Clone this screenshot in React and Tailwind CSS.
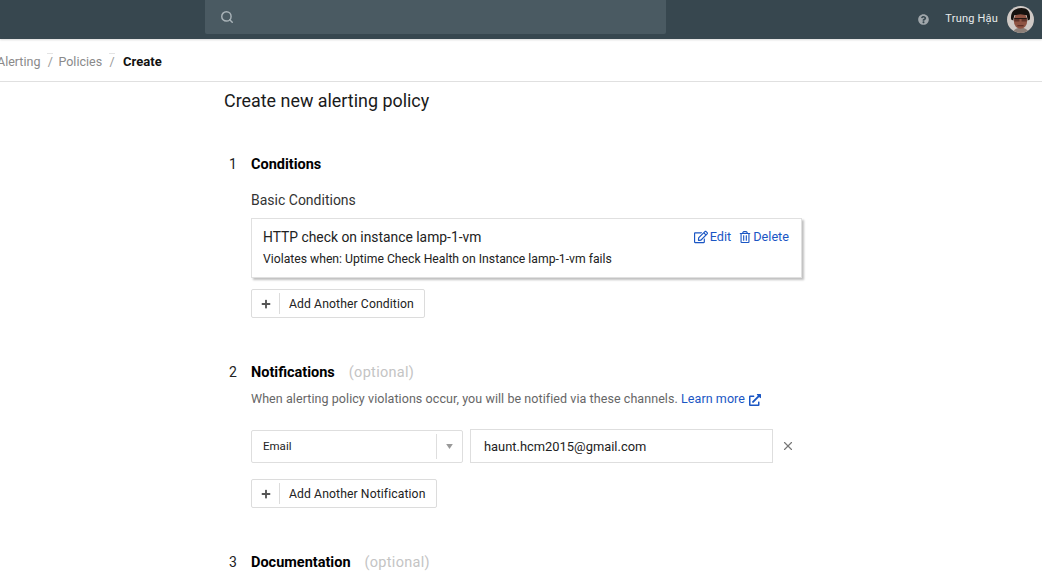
import { Search, X } from 'lucide-react'
import { FaPlus, FaQuestionCircle, FaRegEdit, FaRegTrashAlt, FaExternalLinkAlt } from 'react-icons/fa'

function Avatar() {
  return (
    <svg viewBox="0 0 26 26" className="h-[27px] w-[27px] rounded-full">
      <rect width="26" height="26" fill="#cfc9c5" />
      <path d="M6 26c0-3 3-5 7-5s8 2 8 5z" fill="#8c7f78" />
      <ellipse cx="13" cy="14" rx="6.5" ry="8" fill="#8f5443" />
      <path d="M4 13C3 5 8 2 14 2s9 4 8 11l-2 1-1-5-6-1-6 1-1 5z" fill="#15110e" />
      <path d="M7 12h5v3H7zM14 12h5v3h-5z" fill="#5f3328" />
      <path d="M7 12h12" stroke="#241612" strokeWidth="1" />
      <path d="M10 19h6" stroke="#51261d" strokeWidth="1" />
    </svg>
  )
}

function AddButton({ label, width }) {
  return (
    <button className={`flex h-[29px] ${width} items-center rounded-[2px] border border-[#dcdcdc] bg-white text-[12.2px] text-[#222]`}>
      <span className="flex h-[21px] w-[28px] shrink-0 items-center justify-center border-r border-[#dcdcdc]">
        <FaPlus className="h-[10px] w-[10px] text-[#555]" />
      </span>
      <span className="pl-[9px] pt-[1px] tracking-[0.1px] whitespace-nowrap">{label}</span>
    </button>
  )
}

function StepTitle({ n, title, optional }) {
  return (
    <div className="flex h-5 items-center">
      <span className="w-[27px] pl-[5px] text-[14px] text-[#222]">{n}</span>
      <span className="pt-[1px] text-[14.5px] font-bold text-black">{title}</span>
      {optional && <span className="ml-[14px] pt-[1px] text-[14.5px] tracking-[0.3px] text-[#c4c4c4]">(optional)</span>}
    </div>
  )
}

function Slash({ gap }) {
  return (
    <span className={`${gap} mt-[-3px] w-[6px] border-t border-[#e4e4e4] text-center leading-[15px] text-[#9a9a9a]`}>/</span>
  )
}

export default function App() {
  return (
    <div className="h-[579px] w-[1042px] overflow-hidden bg-white font-['Roboto',sans-serif]">
      <header className="flex h-[39px] items-start bg-[#37474f] shadow-[0_1px_2px_rgba(0,0,0,0.15)]">
        <div className="ml-[205px] flex h-[34px] w-[461px] items-center rounded-b-[2px] bg-[#4a5a62] pl-[15px]">
          <Search className="h-[14px] w-[14px] text-[#a9b3b8]" strokeWidth={2.5} />
        </div>
        <div className="ml-auto flex h-[39px] items-center pr-[8px]">
          <FaQuestionCircle className="h-[11px] w-[11px] text-[#a0a7ab]" />
          <span className="ml-[16px] text-[11px] tracking-[0.2px] text-[#e8ebec]">Trung Hậu</span>
          <span className="ml-[9px]"><Avatar /></span>
        </div>
      </header>

      <nav className="flex h-[43px] items-center border-b border-[#e0e0e0] pt-[4px] text-[12.5px] whitespace-nowrap">
        <span className="ml-[-3px] text-[#8a8a8a]">Alerting</span>
        <Slash gap="ml-[7px]" />
        <span className="ml-[5px] text-[#8a8a8a]">Policies</span>
        <Slash gap="ml-[7px]" />
        <span className="ml-[8px] text-[13px] font-bold text-[#111]">Create</span>
      </nav>

      <main className="pl-[224px]">
        <h1 className="mt-[7px] h-[24px] text-[17.9px] leading-[24px] text-[#1a1a1a]">Create new alerting policy</h1>

        <section className="mt-[41px]">
          <StepTitle n="1" title="Conditions" />
          <div className="pl-[27px]">
            <p className="mt-[16px] h-5 text-[14px] leading-5 text-[#333]">Basic Conditions</p>
            <div className="mt-[8px] flex h-[60px] w-[551px] justify-between border border-[#e0e0e0] bg-white pl-[11px] pr-[12px] pt-[9px] shadow-[2px_2px_2px_rgba(0,0,0,0.25)]">
              <div>
                <p className="h-[18px] text-[13.85px] leading-[18px] text-[#222]">HTTP check on instance lamp-1-vm</p>
                <p className="mt-[5px] text-[12.2px] leading-[16px] text-[#222]">Violates when: Uptime Check Health on Instance lamp-1-vm fails</p>
              </div>
              <div className="flex h-[18px] items-center text-[12.7px] text-[#1a56c4]">
                <FaRegEdit className="mr-[2px] h-[14px] w-[14px]" />
                <span>Edit</span>
                <FaRegTrashAlt className="ml-[8px] mr-[2px] h-[12px] w-[12px]" />
                <span>Delete</span>
              </div>
            </div>
            <div className="mt-[11px]">
              <AddButton label="Add Another Condition" width="w-[174px]" />
            </div>
          </div>
        </section>

        <section className="mt-[44px]">
          <StepTitle n="2" title="Notifications" optional />
          <div className="pl-[27px]">
            <p className="mt-[7px] h-5 whitespace-nowrap text-[12.5px] leading-5 tracking-[0.07px] text-[#666]">
              When alerting policy violations occur, you will be notified via these channels.{' '}
              <span className="text-[#1a56c4]">Learn more<FaExternalLinkAlt className="ml-[4px] inline h-[12px] w-[12px]" /></span>
            </p>
            <div className="mt-[20px] flex items-center">
              <div className="flex h-[33px] w-[212px] items-center rounded-[2px] border border-[#dedede] pl-[11px] text-[11.5px] text-[#222]">
                <span className="flex-1 pt-[1px]">Email</span>
                <span className="flex h-[25px] w-[26px] items-center justify-center border-l border-[#dedede]">
                  <svg viewBox="0 0 8 6" className="h-[5px] w-[7px]"><path d="M0 0h8L4 6z" fill="#999" /></svg>
                </span>
              </div>
              <div className="ml-[7px] flex h-[34px] w-[303px] items-center border border-[#dedede] pl-[13px] pt-[1px] text-[12.9px] text-[#222]">
                haunt.hcm2015@gmail.com
              </div>
              <X className="ml-[8px] h-[14px] w-[14px] text-[#777]" strokeWidth={2} />
            </div>
            <div className="mt-[16px]">
              <AddButton label="Add Another Notification" width="w-[186px]" />
            </div>
          </div>
        </section>

        <section className="mt-[44px]">
          <StepTitle n="3" title="Documentation" optional />
        </section>
      </main>
    </div>
  )
}
